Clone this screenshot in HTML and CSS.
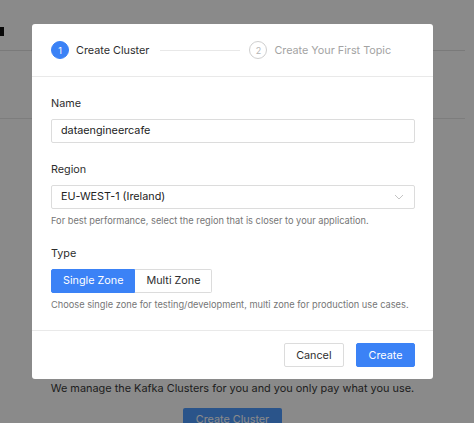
FILE: index.html
```html
<!DOCTYPE html>
<html>
<head>
<meta charset="utf-8">
<link rel="stylesheet" href="styles.css">
</head>
<body>
<div class="page">
  <header class="topbar"><span class="logo-mark"></span></header>
  <div class="subbar"></div>
  <main class="empty">
    <p class="empty-text">We manage the Kafka Clusters for you and you only pay what you use.</p>
    <button class="empty-btn">Create Cluster</button>
  </main>
</div>

<div class="overlay">
  <div class="modal">
    <div class="modal-header">
      <div class="step active">
        <span class="step-num">1</span>
        <span class="step-title">Create Cluster</span>
      </div>
      <span class="step-line"></span>
      <div class="step">
        <span class="step-num">2</span>
        <span class="step-title">Create Your First Topic</span>
      </div>
    </div>
    <div class="modal-body">
      <div class="field">
        <label class="label">Name</label>
        <div class="input">dataengineercafe</div>
      </div>
      <div class="field">
        <label class="label">Region</label>
        <div class="input select">
          <span>EU-WEST-1 (Ireland)</span>
          <svg class="chev" width="10" height="6" viewBox="0 0 10 6"><path d="M1 1l4 4 4-4" fill="none" stroke="#c4c4c4" stroke-width="1"/></svg>
        </div>
        <p class="help">For best performance, select the region that is closer to your application.</p>
      </div>
      <div class="field">
        <label class="label">Type</label>
        <div class="segmented">
          <span class="seg on">Single Zone</span>
          <span class="seg">Multi Zone</span>
        </div>
        <p class="help">Choose single zone for testing/development, multi zone for production use cases.</p>
      </div>
    </div>
    <div class="modal-footer">
      <button class="btn">Cancel</button>
      <button class="btn primary">Create</button>
    </div>
  </div>
</div>
</body>
</html>
```

FILE: styles.css
```css
* { box-sizing: border-box; }
html, body { margin: 0; padding: 0; }
body {
  font-family: Inter, "Noto Sans", sans-serif;
  background: #fff;
  color: #333;
  width: 474px;
  height: 423px;
  overflow: hidden;
  white-space: nowrap;
}
.page {
  width: 465px;
  height: 423px;
  overflow: hidden;
  display: flex;
  flex-direction: column;
}
.page > * { flex-shrink: 0; }
.topbar {
  height: 51px;
  border-bottom: 1px solid #e2e2e2;
  display: flex;
  align-items: center;
}
.logo-mark {
  display: block;
  width: 4px;
  height: 9px;
  background: #111;
  margin-top: 12px;
}
.subbar {
  height: 68px;
  border-bottom: 1px solid #e8e8e8;
}
.empty {
  display: flex;
  flex-direction: column;
  align-items: center;
  padding-top: 261px;
}
.empty-text {
  margin: 0;
  font-size: 10.9px;
  line-height: 16px;
  color: #3a3a3a;
}
.empty-btn {
  margin-top: 12px;
  width: 99px;
  height: 30px;
  border: 0;
  border-radius: 2px;
  background: #4f9cff;
  color: #fff;
  font-family: inherit;
  font-size: 10.8px;
  padding: 0 0 8px;
}

.overlay {
  position: fixed;
  inset: 0;
  background: rgba(0, 0, 0, 0.46);
  padding: 24px 0 0 32px;
}
.modal {
  width: 401px;
  background: #fff;
  border-radius: 3px;
}
.modal-header {
  height: 53px;
  border-bottom: 1px solid #e9e9e9;
  display: flex;
  align-items: center;
  padding: 0 18px 0 19px;
}
.step {
  display: flex;
  align-items: center;
  gap: 7px;
}
.step-num {
  width: 18px;
  height: 18px;
  border-radius: 50%;
  border: 1px solid #cfcfcf;
  color: #b5b5b5;
  font-size: 9px;
  display: flex;
  align-items: center;
  justify-content: center;
}
.step-title {
  font-size: 10.8px;
  color: #a3a3a3;
}
.step.active .step-num {
  background: #3b82f6;
  border-color: #3b82f6;
  color: #fff;
}
.step.active .step-title { color: #2e2e2e; }
.step-line {
  width: 80px;
  height: 1px;
  background: #e8e8e8;
  margin: 0 9px 0 11px;
}
.modal-body {
  padding: 17px 18px 19px 19px;
  display: flex;
  flex-direction: column;
  gap: 17px;
}
.field { display: flex; flex-direction: column; }
.label {
  font-size: 10.8px;
  line-height: 20px;
  color: #2e2e2e;
  margin-bottom: 5px;
}
.input {
  height: 24px;
  border: 1px solid #dcdcdc;
  border-radius: 2px;
  padding: 0 9px;
  font-size: 10.8px;
  line-height: 22px;
  color: #222;
  display: flex;
  align-items: center;
}
.select { justify-content: space-between; padding-right: 10px; }
.chev { display: block; }
.help {
  margin: 6px 0 0;
  font-size: 9.25px;
  line-height: 12px;
  color: #767676;
}
.segmented { display: flex; }
.seg {
  height: 24px;
  padding: 0 11px;
  border: 1px solid #dcdcdc;
  font-size: 10.8px;
  line-height: 22px;
  color: #2e2e2e;
}
.seg.on {
  background: #3b82f6;
  border-color: #3b82f6;
  color: #fff;
  border-radius: 2px 0 0 2px;
}
.seg:last-child { border-left: 0; border-radius: 0 2px 2px 0; }
.modal-footer {
  border-top: 1px solid #e9e9e9;
  height: 49px;
  display: flex;
  align-items: center;
  justify-content: flex-end;
  gap: 12px;
  padding: 0 18px;
}
.btn {
  height: 24px;
  padding: 0 11.5px;
  border: 1px solid #dcdcdc;
  border-radius: 2px;
  background: #fff;
  color: #2e2e2e;
  font-family: inherit;
  font-size: 10.8px;
}
.btn.primary {
  background: #3b82f6;
  border-color: #3b82f6;
  color: #fff;
}
```
